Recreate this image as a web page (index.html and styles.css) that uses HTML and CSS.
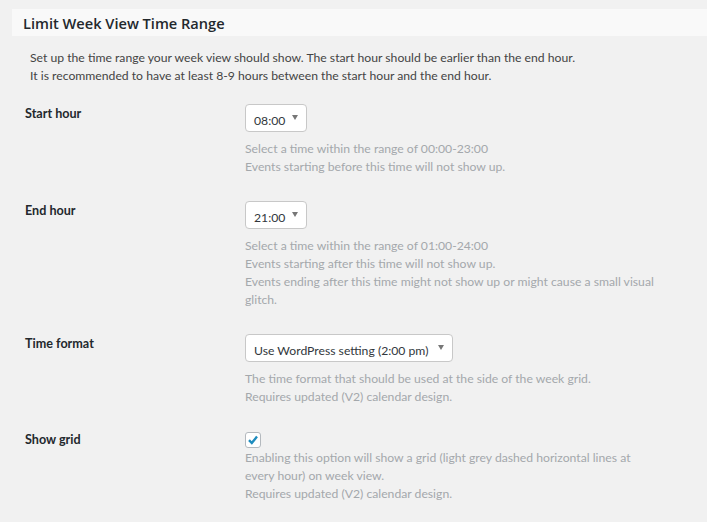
FILE: index.html
```html
<!DOCTYPE html>
<html lang="en">
<head>
    <meta charset="UTF-8">
    <meta name="viewport" content="width=device-width, initial-scale=1.0">
    <title>Limit Week View Time Range</title>
    <link rel="stylesheet" href="styles.css">
</head>
<body>
    <div class="section-header">
        <h2>Limit Week View Time Range</h2>
    </div>
    <div class="section-intro">
        <p>Set up the time range your week view should show. The start hour should be earlier than the end hour.</p>
        <p>It is recommended to have at least 8-9 hours between the start hour and the end hour.</p>
    </div>

    <div class="form-table">
        <div class="form-row">
            <div class="form-label">Start hour</div>
            <div class="form-field">
                <div class="select-box select-small">08:00<span class="select-arrow"></span></div>
                <p class="help">Select a time within the range of 00:00-23:00</p>
                <p class="help">Events starting before this time will not show up.</p>
            </div>
        </div>
        <div class="form-row">
            <div class="form-label">End hour</div>
            <div class="form-field">
                <div class="select-box select-small">21:00<span class="select-arrow"></span></div>
                <p class="help">Select a time within the range of 01:00-24:00</p>
                <p class="help">Events starting after this time will not show up.</p>
                <p class="help">Events ending after this time might not show up or might cause a small visual glitch.</p>
            </div>
        </div>
        <div class="form-row">
            <div class="form-label">Time format</div>
            <div class="form-field">
                <div class="select-box select-wide">Use WordPress setting (2:00 pm)<span class="select-arrow"></span></div>
                <p class="help">The time format that should be used at the side of the week grid.</p>
                <p class="help">Requires updated (V2) calendar design.</p>
            </div>
        </div>
        <div class="form-row row-check">
            <div class="form-label">Show grid</div>
            <div class="form-field">
                <div class="checkbox">
                    <svg width="14" height="14" viewBox="0 0 14 14"><path d="M3 7.2 L5.8 10 L11 3.6" fill="none" stroke="#1e8cbe" stroke-width="2.4"/></svg>
                </div>
                <p class="help">Enabling this option will show a grid (light grey dashed horizontal lines at every hour) on week view.</p>
                <p class="help">Requires updated (V2) calendar design.</p>
            </div>
        </div>
    </div>
</body>
</html>
```

FILE: styles.css
```css
body {
    margin: 0;
    background-color: #f1f1f1;
    font-family: Lato, sans-serif;
    font-size: 12.2px;
    color: #444;
}

p {
    margin: 0;
}

.section-header {
    margin: 9px 0 0 12px;
    height: 27px;
    background-color: #f9f9f9;
}

.section-header h2 {
    margin: 0;
    padding-left: 11px;
    font-family: "Open Sans", sans-serif;
    font-size: 14.6px;
    line-height: 28px;
    font-weight: 600;
    color: #23282d;
}

.section-intro {
    padding: 13px 0 0 30px;
    line-height: 18px;
}

.form-table {
    padding: 19px 0 0 25px;
}

.form-row {
    display: flex;
    margin-bottom: 25px;
}

.form-label {
    width: 220px;
    padding-top: 1px;
    font-size: 12.6px;
    font-weight: 700;
    color: #23282d;
    line-height: 18px;
}

.form-field {
    width: 414px;
}

.help {
    color: #a4a8ac;
    line-height: 18px;
}

.select-box {
    position: relative;
    box-sizing: border-box;
    height: 28px;
    margin-bottom: 8px;
    padding-left: 8px;
    border: 1px solid #c8c8c8;
    border-radius: 4px;
    background-color: #fff;
    color: #32373c;
    line-height: 31px;
}

.select-small {
    width: 62px;
}

.select-wide {
    width: 208px;
}

.select-arrow {
    position: absolute;
    right: 8px;
    top: 10px;
    border-left: 3.5px solid transparent;
    border-right: 3.5px solid transparent;
    border-top: 5px solid #777;
}

.row-check .form-label {
    padding-top: 0;
}

.checkbox {
    box-sizing: border-box;
    width: 16px;
    height: 16px;
    margin-top: 1px;
    margin-bottom: 1px;
    border: 1px solid #b4b9be;
    border-radius: 3px;
    background-color: #fff;
    display: flex;
    align-items: center;
    justify-content: center;
}
```
